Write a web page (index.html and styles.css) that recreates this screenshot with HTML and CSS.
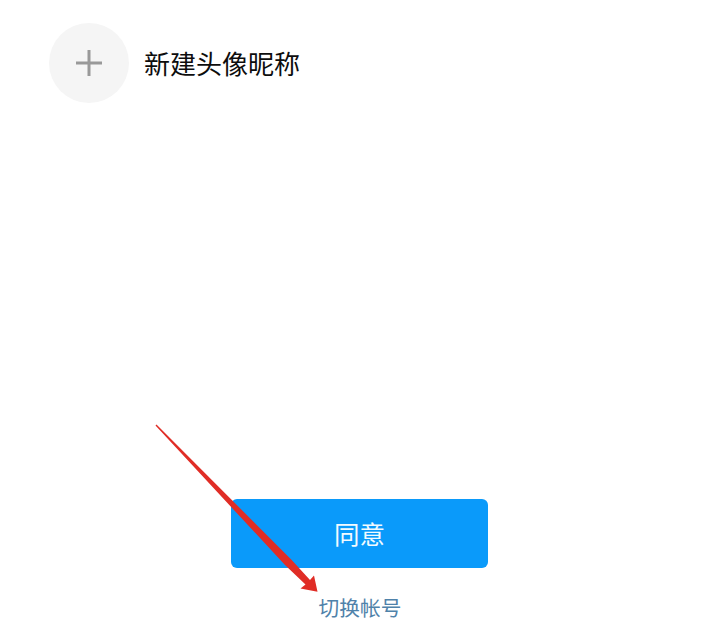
FILE: index.html
```html
<!DOCTYPE html>
<html lang="zh-CN">
<head>
<meta charset="utf-8">
<title>新建头像昵称</title>
<link rel="stylesheet" href="styles.css">
</head>
<body>
<main class="page">
  <div class="new-profile">
    <div class="avatar">
      <svg class="plus" viewBox="0 0 28 28" width="28" height="28" aria-hidden="true"><path d="M14 1v26M1 14h26"/></svg>
    </div>
    <span class="name">新建头像昵称</span>
  </div>
  <div class="actions">
    <button class="agree" type="button">同意</button>
    <a class="switch" href="#">切换帐号</a>
  </div>
</main>
<svg class="arrow" viewBox="0 0 720 639" width="720" height="639" aria-hidden="true">
  <path class="arrow-fill" d="M155.5 425.5 L156.5 424.5 L291.7 560 L310 580 L314 575.5 L317.5 591.8 L300.5 588.5 L305.5 584.5 L285 565 Z"/>
</svg>
</body>
</html>
```

FILE: styles.css
```css
html, body {
  margin: 0;
  padding: 0;
  background: #fff;
}
body {
  position: relative;
  width: 720px;
  height: 639px;
  overflow: hidden;
  font-family: "Noto Sans CJK SC", "Liberation Sans", sans-serif;
}
.page {
  box-sizing: border-box;
  height: 639px;
  display: flex;
  flex-direction: column;
  justify-content: space-between;
  padding: 23px 0 18px;
}
.new-profile {
  display: flex;
  align-items: center;
  gap: 15px;
  padding-left: 49px;
}
.avatar {
  width: 80px;
  height: 80px;
  border-radius: 50%;
  background: #f5f5f5;
  display: flex;
  align-items: center;
  justify-content: center;
}
.plus path {
  fill: none;
  stroke: #999;
  stroke-width: 3;
}
.name {
  font-size: 26px;
  line-height: 36px;
  color: #0d0d0d;
}
.actions {
  display: flex;
  flex-direction: column;
  align-items: center;
  gap: 25px;
}
.agree {
  width: 257px;
  height: 69px;
  margin-left: -1px;
  border: 0;
  border-radius: 6px;
  background: #0a9afa;
  color: #f2faff;
  font: inherit;
  font-size: 25.5px;
  padding: 0 0 3px;
}
.switch {
  font-size: 20.7px;
  line-height: 28px;
  color: #4f82aa;
  text-decoration: none;
}
.arrow {
  position: absolute;
  left: 0;
  top: 0;
  pointer-events: none;
}
.arrow-fill {
  fill: #e02d26;
}
```
